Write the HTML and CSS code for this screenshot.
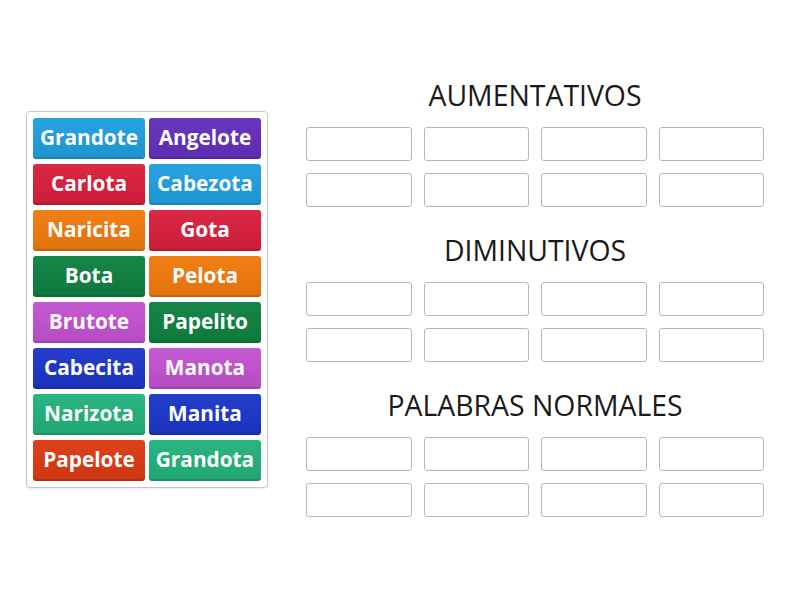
FILE: index.html
```html
<!DOCTYPE html>
<html lang="es">
<head>
<meta charset="utf-8">
<title>Group sort</title>
<link rel="stylesheet" href="styles.css">
</head>
<body>
<div class="page">
  <div class="bank">
    <div class="tile c-blue">Grandote</div>
    <div class="tile c-purple">Angelote</div>
    <div class="tile c-red">Carlota</div>
    <div class="tile c-blue">Cabezota</div>
    <div class="tile c-orange">Naricita</div>
    <div class="tile c-red">Gota</div>
    <div class="tile c-green">Bota</div>
    <div class="tile c-orange">Pelota</div>
    <div class="tile c-magenta">Brutote</div>
    <div class="tile c-green">Papelito</div>
    <div class="tile c-navy">Cabecita</div>
    <div class="tile c-magenta">Manota</div>
    <div class="tile c-teal">Narizota</div>
    <div class="tile c-navy">Manita</div>
    <div class="tile c-rust">Papelote</div>
    <div class="tile c-teal">Grandota</div>
  </div>
  <div class="groups">
    <section class="group">
      <h2 class="group-title">AUMENTATIVOS</h2>
      <div class="slots">
        <div class="slot"></div><div class="slot"></div><div class="slot"></div><div class="slot"></div>
        <div class="slot"></div><div class="slot"></div><div class="slot"></div><div class="slot"></div>
      </div>
    </section>
    <section class="group">
      <h2 class="group-title">DIMINUTIVOS</h2>
      <div class="slots">
        <div class="slot"></div><div class="slot"></div><div class="slot"></div><div class="slot"></div>
        <div class="slot"></div><div class="slot"></div><div class="slot"></div><div class="slot"></div>
      </div>
    </section>
    <section class="group">
      <h2 class="group-title">PALABRAS NORMALES</h2>
      <div class="slots">
        <div class="slot"></div><div class="slot"></div><div class="slot"></div><div class="slot"></div>
        <div class="slot"></div><div class="slot"></div><div class="slot"></div><div class="slot"></div>
      </div>
    </section>
  </div>
</div>
</body>
</html>
```

FILE: styles.css
```css
* { box-sizing: border-box; }
html, body {
  margin: 0;
  padding: 0;
  background: #ffffff;
  font-family: "Open Sans", "Liberation Sans", sans-serif;
}
.page {
  width: 800px;
  height: 600px;
  display: flex;
  align-items: flex-start;
  padding-left: 26px;
}
.bank {
  margin-top: 111px;
  width: 242px;
  border: 1px solid #c6c6c6;
  border-radius: 4px;
  padding: 6px;
  display: grid;
  grid-template-columns: 112px 112px;
  column-gap: 4px;
  row-gap: 5px;
  box-shadow: 0 1px 2px rgba(0,0,0,0.08);
}
.tile {
  height: 41px;
  line-height: 38px;
  border-radius: 3px;
  color: #ffffff;
  font-weight: 700;
  font-size: 20.8px;
  text-align: center;
  white-space: nowrap;
  background-image: linear-gradient(rgba(255,255,255,0.04), rgba(0,0,0,0.07));
  box-shadow: inset 0 -2px 0 rgba(0,0,0,0.12);
}
.c-blue { background-color: #1f9fe0; }
.c-purple { background-color: #632fbc; }
.c-red { background-color: #da1f3c; }
.c-orange { background-color: #f27a0c; }
.c-green { background-color: #0e8140; }
.c-magenta { background-color: #c352d2; }
.c-navy { background-color: #1c36c9; }
.c-teal { background-color: #21b27c; }
.c-rust { background-color: #dc3a12; }

.groups {
  margin-top: 77px;
  margin-left: 38px;
  width: 458px;
  display: flex;
  flex-direction: column;
  gap: 25px;
}
.group-title {
  margin: 0 0 14px 0;
  height: 36px;
  line-height: 36px;
  font-size: 28.4px;
  font-weight: 400;
  color: #1a1a1a;
  text-align: center;
}
.slots {
  display: grid;
  grid-template-columns: repeat(4, 1fr);
  column-gap: 12px;
  row-gap: 12px;
}
.slot {
  height: 34px;
  border: 1px solid #b8b8b8;
  border-radius: 3px;
  background: #ffffff;
}
```
